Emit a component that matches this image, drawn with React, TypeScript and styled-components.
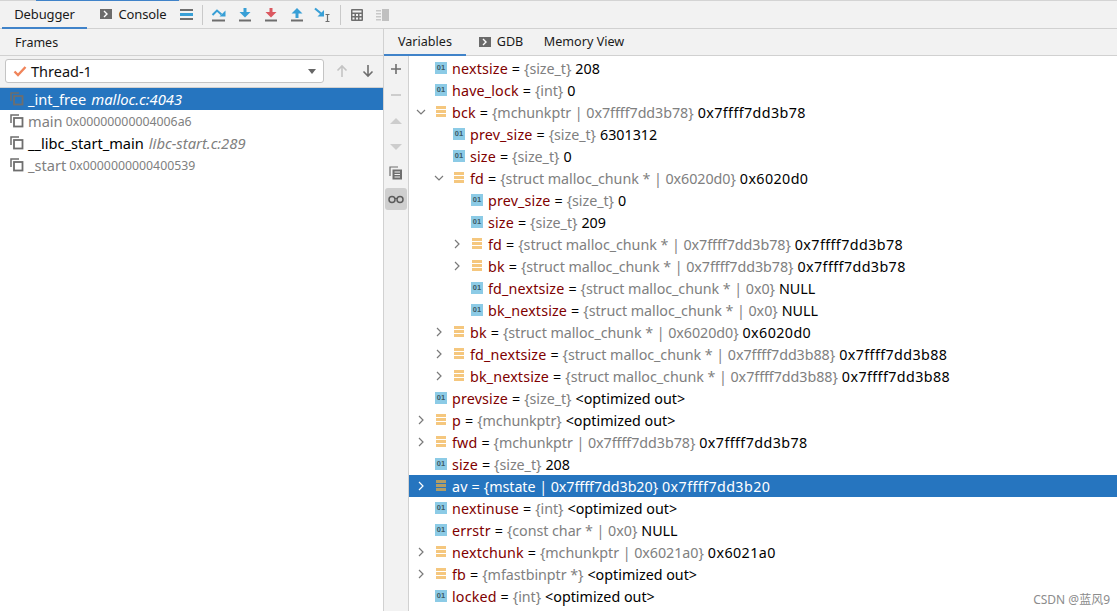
import React from 'react';
import styled, { createGlobalStyle } from 'styled-components';

const Global = createGlobalStyle`
  html, body { margin: 0; padding: 0; background: #fff; }
  body { font-family: "Noto Sans", "Open Sans", sans-serif; font-size: 13px; color: #000; overflow: hidden; }
`;

const Page = styled.div`
  width: 1117px;
  height: 611px;
  display: flex;
  flex-direction: column;
  overflow: hidden;
  position: relative;
`;

const TopBar = styled.div`
  height: 29px;
  flex: none;
  display: flex;
  align-items: stretch;
  background: #f2f2f2;
  border-top: 1px solid #d4d4d4;
  border-bottom: 1px solid #d1d1d1;
  padding-left: 2px;
  box-sizing: border-box;
  position: relative;

  &::before {
    content: '';
    position: absolute;
    top: -1px;
    left: 36px;
    width: 143px;
    height: 1px;
    background: #4083c9;
  }
`;

const Tab = styled.div<{ $active?: boolean; $w: number }>`
  width: ${p => p.$w}px;
  flex: none;
  box-sizing: border-box;
  display: flex;
  align-items: center;
  justify-content: center;
  gap: 6px;
  font-size: 13px;
  color: #1a1a1a;
  letter-spacing: -0.1px;
  border-bottom: 2px solid ${p => (p.$active ? '#4083c9' : 'transparent')};
  margin-bottom: -1px;
`;

const ToolIcon = styled.div<{ $w?: number }>`
  width: ${p => p.$w ?? 26}px;
  flex: none;
  display: flex;
  align-items: center;
  justify-content: center;
`;

const ToolSep = styled.div<{ $gap: number }>`
  width: 1px;
  height: 20px;
  background: #c9c9c9;
  align-self: center;
  margin: 0 3px 0 ${p => p.$gap}px;
  flex: none;
`;

const Body = styled.div`
  flex: 1;
  display: flex;
  min-height: 0;
`;

const LeftPane = styled.div`
  width: 383px;
  flex: none;
  display: flex;
  flex-direction: column;
  border-right: 1px solid #d1d1d1;
`;

const PaneHeader = styled.div`
  height: 27px;
  box-sizing: border-box;
  flex: none;
  display: flex;
  align-items: stretch;
  background: #f2f2f2;
  border-bottom: 1px solid #d1d1d1;
`;

const PaneTitle = styled.div`
  padding-left: 15px;
  display: flex;
  align-items: center;
  font-size: 12.5px;
  color: #1a1a1a;
`;

const ThreadRow = styled.div`
  height: 32px;
  flex: none;
  display: flex;
  align-items: flex-start;
  background: #f2f2f2;
  border-bottom: 1px solid #d1d1d1;
  padding: 3px 0 0 5px;
  box-sizing: border-box;
`;

const ThreadSelect = styled.div`
  width: 319px;
  height: 24px;
  box-sizing: border-box;
  background: #fff;
  border: 1px solid #c4c4c4;
  border-radius: 3px;
  display: flex;
  align-items: center;
  padding-left: 7px;
  gap: 4px;
  font-size: 14.5px;
  color: #111;
`;

const Caret = styled.div`
  margin-left: auto;
  margin-right: 7px;
  width: 0;
  height: 0;
  border-left: 4px solid transparent;
  border-right: 4px solid transparent;
  border-top: 5px solid #666;
`;

const ThreadArrows = styled.div`
  display: flex;
  gap: 12px;
  margin: 5px 0 0 11px;
`;

const FrameList = styled.div`
  flex: 1;
  background: #fff;
`;

const FrameRow = styled.div<{ $selected?: boolean }>`
  height: 22px;
  display: flex;
  align-items: center;
  padding-left: 10px;
  gap: 4px;
  white-space: nowrap;
  font-size: 14.6px;
  background: ${p => (p.$selected ? '#2675bf' : 'transparent')};
  color: ${p => (p.$selected ? '#fff' : '#000')};
`;

const FrameName = styled.span<{ $dim?: boolean }>`
  color: ${p => (p.$dim ? '#808080' : 'inherit')};
`;

const FrameLoc = styled.span<{ $selected?: boolean }>`
  font-style: italic;
  font-size: 14.8px;
  margin-left: 1px;
  color: ${p => (p.$selected ? '#fff' : '#808080')};
`;

const FrameAddr = styled.span`
  font-size: 12.3px;
  margin-left: -1px;
  color: #808080;
`;

const RightPane = styled.div`
  flex: 1;
  min-width: 0;
  display: flex;
  flex-direction: column;
`;

const SubTab = styled(Tab)`
  font-size: 12.6px;
  letter-spacing: 0;
`;

const Content = styled.div`
  flex: 1;
  display: flex;
  min-height: 0;
`;

const SideBar = styled.div`
  width: 24px;
  flex: none;
  background: #f2f2f2;
  border-right: 1px solid #d1d1d1;
  display: flex;
  flex-direction: column;
  align-items: center;
  gap: 4px;
  padding-top: 2px;
`;

const SideBtn = styled.div<{ $on?: boolean }>`
  width: 22px;
  height: 22px;
  display: flex;
  align-items: center;
  justify-content: center;
  border-radius: 3px;
  background: ${p => (p.$on ? '#cfcfcf' : 'transparent')};
`;

const Tree = styled.div`
  flex: 1;
  min-width: 0;
  background: #fff;
  padding-top: 1px;
`;

const Row = styled.div<{ $level: number; $selected?: boolean }>`
  height: 22px;
  display: flex;
  align-items: center;
  padding-left: ${p => 6 + p.$level * 18}px;
  white-space: nowrap;
  font-size: 14.3px;
  background: ${p => (p.$selected ? '#2675bf' : 'transparent')};
  color: ${p => (p.$selected ? '#fff' : '#000')};
`;

const Chevron = styled.div`
  width: 12px;
  height: 12px;
  flex: none;
  margin-right: 8px;
  display: flex;
  align-items: center;
  justify-content: center;
`;

const NodeIcon = styled.div`
  width: 12px;
  height: 12px;
  flex: none;
  margin-right: 5px;
`;

const VarName = styled.span<{ $selected?: boolean }>`
  color: ${p => (p.$selected ? '#fff' : '#7f0000')};
  letter-spacing: 0.15px;
`;

const Eq = styled.span`
  margin: 0 4px;
`;

const VarType = styled.span<{ $selected?: boolean }>`
  color: ${p => (p.$selected ? '#fff' : '#808080')};
  margin-right: 4px;
  letter-spacing: -0.05px;
`;

const VarValue = styled.span<{ $hex: boolean }>`
  letter-spacing: ${p => (p.$hex ? '0.4px' : '0')};
`;

const Watermark = styled.div`
  position: absolute;
  right: 7px;
  bottom: 3px;
  font-size: 12px;
  color: #8c8c8c;
  font-family: "Noto Sans", "Noto Sans CJK SC", sans-serif;
`;

const StepOver = () => (
  <svg width="16" height="16" viewBox="0 0 16 16">
    <path d="M1.5 8 L6 3.5 L10.5 7.5" fill="none" stroke="#389fd6" strokeWidth="2" />
    <path d="M14.5 3.5 V9.5 H8.5 Z" fill="#389fd6" />
    <rect x="1" y="12.5" width="13" height="2" fill="#6e6e6e" />
  </svg>
);

const ArrowDown = ({ color }: { color: string }) => (
  <svg width="16" height="16" viewBox="0 0 16 16">
    <path d="M6.5 1 H9.5 V5 H13.5 L8 10.5 L2.5 5 H6.5 Z" fill={color} />
    <rect x="2" y="12.5" width="12" height="2" fill="#6e6e6e" />
  </svg>
);

const ArrowUpOut = () => (
  <svg width="16" height="16" viewBox="0 0 16 16">
    <path d="M6.5 11 H9.5 V6.5 H13.5 L8 1 L2.5 6.5 H6.5 Z" fill="#389fd6" />
    <rect x="2" y="12.5" width="12" height="2" fill="#6e6e6e" />
  </svg>
);

const RunToCursor = () => (
  <svg width="18" height="16" viewBox="0 0 18 16">
    <path d="M1 1.5 L7 6.5" fill="none" stroke="#389fd6" strokeWidth="2.2" />
    <path d="M10 3 V9.5 H3.5 Z" fill="#389fd6" />
    <path d="M11.5 7.5 H15.5 M13.5 7.5 V14.5 M11.5 14.5 H15.5" fill="none" stroke="#6e6e6e" strokeWidth="1.2" />
  </svg>
);

const Calculator = () => (
  <svg width="14" height="14" viewBox="0 0 14 14">
    <rect x="1" y="1" width="12" height="12" rx="1" fill="#6e6e6e" />
    <rect x="2.5" y="2.5" width="9" height="2" fill="#f2f2f2" />
    <path d="M2.5 6 H4.5 V8 H2.5 Z M6 6 H8 V8 H6 Z M9.5 6 H11.5 V8 H9.5 Z M2.5 9.5 H4.5 V11.5 H2.5 Z M6 9.5 H8 V11.5 H6 Z M9.5 9.5 H11.5 V11.5 H9.5 Z" fill="#f2f2f2" />
  </svg>
);

const Layout = () => (
  <svg width="14" height="14" viewBox="0 0 14 14">
    <path d="M0 2 H5 V3.5 H0 Z M0 5 H5 V6.5 H0 Z M0 8 H5 V9.5 H0 Z M0 11 H5 V12.5 H0 Z" fill="#c8c8c8" />
    <rect x="6" y="1" width="7" height="12" fill="#c0c0c0" />
  </svg>
);

const MenuLines = () => (
  <svg width="14" height="14" viewBox="0 0 14 14">
    <rect x="0" y="1" width="13" height="2" fill="#6e6e6e" />
    <rect x="0" y="5" width="13" height="3" fill="#389fd6" />
    <rect x="0" y="10" width="13" height="2" fill="#6e6e6e" />
  </svg>
);

const ConsoleIcon = () => (
  <svg width="12" height="10" viewBox="0 0 12 10">
    <rect width="12" height="10" fill="#6b6b6b" />
    <path d="M4 2 L7 5 L4 8" fill="none" stroke="#fff" strokeWidth="1.4" />
  </svg>
);

const FrameIcon = () => (
  <svg width="14" height="14" viewBox="0 0 14 14" style={{ flex: 'none' }}>
    <path d="M1 9 V1 H9" fill="none" stroke="#6e6e6e" strokeWidth="1.5" />
    <rect x="4" y="4" width="8.5" height="8.5" fill="none" stroke="#6e6e6e" strokeWidth="1.8" />
  </svg>
);

const Check = () => (
  <svg width="14" height="12" viewBox="0 0 14 12">
    <path d="M1.5 6.5 L5 10 L12.5 2" fill="none" stroke="#f0845a" strokeWidth="2.4" />
  </svg>
);

const UpDown = ({ dir, color }: { dir: 'up' | 'down'; color: string }) => (
  <svg width="14" height="14" viewBox="0 0 14 14">
    <path
      d={dir === 'up' ? 'M7 13 V2 M2.5 6.5 L7 2 L11.5 6.5' : 'M7 1 V12 M2.5 7.5 L7 12 L11.5 7.5'}
      fill="none"
      stroke={color}
      strokeWidth="1.6"
    />
  </svg>
);

const Plus = ({ color }: { color: string }) => (
  <svg width="12" height="12" viewBox="0 0 12 12">
    <path d="M6 1 V11 M1 6 H11" stroke={color} strokeWidth="1.6" />
  </svg>
);

const Minus = () => (
  <svg width="12" height="12" viewBox="0 0 12 12">
    <path d="M1 6 H11" stroke="#c4c4c4" strokeWidth="1.6" />
  </svg>
);

const Tri = ({ up }: { up?: boolean }) => (
  <svg width="12" height="8" viewBox="0 0 12 8">
    <path d={up ? 'M0 7 L6 1 L12 7 Z' : 'M0 1 L6 7 L12 1 Z'} fill="#cdcdcd" />
  </svg>
);

const CopyList = () => (
  <svg width="14" height="14" viewBox="0 0 14 14">
    <path d="M1 10 V1 H9" fill="none" stroke="#6e6e6e" strokeWidth="1.2" />
    <rect x="3.5" y="3.5" width="9.5" height="10" fill="#6e6e6e" />
    <path d="M5.5 6 H11 M5.5 8.5 H11 M5.5 11 H11" stroke="#f2f2f2" strokeWidth="1" />
  </svg>
);

const Glasses = () => (
  <svg width="16" height="10" viewBox="0 0 16 10">
    <circle cx="4" cy="5.5" r="3" fill="none" stroke="#5c5c5c" strokeWidth="1.5" />
    <circle cx="12" cy="5.5" r="3" fill="none" stroke="#5c5c5c" strokeWidth="1.5" />
    <path d="M7 4.5 H9" stroke="#5c5c5c" strokeWidth="1.2" fill="none" />
  </svg>
);

const PrimIcon = () => (
  <svg width="12" height="12" viewBox="0 0 12 12" style={{ display: 'block' }}>
    <rect width="12" height="12" fill="#8ccbe6" />
    <text x="6" y="8.4" textAnchor="middle" fontSize="7.5" fontWeight="700" fontFamily="'Liberation Sans', sans-serif" fill="#3d5a66">01</text>
  </svg>
);

const StructIcon = ({ selected }: { selected?: boolean }) => (
  <svg width="12" height="12" viewBox="0 0 12 12" style={{ display: 'block' }}>
    <path d="M1 0 H11 V3 H1 Z M1 4 H11 V7 H1 Z M1 8 H11 V11 H1 Z" fill={selected ? '#b09d66' : '#f5c77e'} />
  </svg>
);

const ChevronIcon = ({ open, color }: { open?: boolean; color: string }) => (
  <svg width="10" height="10" viewBox="0 0 10 10">
    <path d={open ? 'M1 3 L5 7 L9 3' : 'M3 1 L7 5 L3 9'} fill="none" stroke={color} strokeWidth="1.2" />
  </svg>
);

interface IVar {
  level: number;
  name: string;
  type: string;
  value: string;
  kind: 'prim' | 'struct';
  open?: boolean;
  selected?: boolean;
}

const P = (level: number, name: string, type: string, value: string): IVar => ({ level, name, type, value, kind: 'prim' });
const S = (level: number, name: string, type: string, value: string, open?: boolean, selected?: boolean): IVar => ({
  level, name, type, value, kind: 'struct', open, selected,
});

const VARS: IVar[] = [
  P(0, 'nextsize', '{size_t}', '208'),
  P(0, 'have_lock', '{int}', '0'),
  S(0, 'bck', '{mchunkptr | 0x7ffff7dd3b78}', '0x7ffff7dd3b78', true),
  P(1, 'prev_size', '{size_t}', '6301312'),
  P(1, 'size', '{size_t}', '0'),
  S(1, 'fd', '{struct malloc_chunk * | 0x6020d0}', '0x6020d0', true),
  P(2, 'prev_size', '{size_t}', '0'),
  P(2, 'size', '{size_t}', '209'),
  S(2, 'fd', '{struct malloc_chunk * | 0x7ffff7dd3b78}', '0x7ffff7dd3b78'),
  S(2, 'bk', '{struct malloc_chunk * | 0x7ffff7dd3b78}', '0x7ffff7dd3b78'),
  P(2, 'fd_nextsize', '{struct malloc_chunk * | 0x0}', 'NULL'),
  P(2, 'bk_nextsize', '{struct malloc_chunk * | 0x0}', 'NULL'),
  S(1, 'bk', '{struct malloc_chunk * | 0x6020d0}', '0x6020d0'),
  S(1, 'fd_nextsize', '{struct malloc_chunk * | 0x7ffff7dd3b88}', '0x7ffff7dd3b88'),
  S(1, 'bk_nextsize', '{struct malloc_chunk * | 0x7ffff7dd3b88}', '0x7ffff7dd3b88'),
  P(0, 'prevsize', '{size_t}', '<optimized out>'),
  S(0, 'p', '{mchunkptr}', '<optimized out>'),
  S(0, 'fwd', '{mchunkptr | 0x7ffff7dd3b78}', '0x7ffff7dd3b78'),
  P(0, 'size', '{size_t}', '208'),
  S(0, 'av', '{mstate | 0x7ffff7dd3b20}', '0x7ffff7dd3b20', false, true),
  P(0, 'nextinuse', '{int}', '<optimized out>'),
  P(0, 'errstr', '{const char * | 0x0}', 'NULL'),
  S(0, 'nextchunk', '{mchunkptr | 0x6021a0}', '0x6021a0'),
  S(0, 'fb', '{mfastbinptr *}', '<optimized out>'),
  P(0, 'locked', '{int}', '<optimized out>'),
];

const VarRow = ({ v }: { v: IVar }) => (
  <Row $level={v.level} $selected={v.selected}>
    <Chevron>
      {v.kind === 'struct' && <ChevronIcon open={v.open} color={v.selected ? '#fff' : '#7a7a7a'} />}
    </Chevron>
    <NodeIcon>{v.kind === 'prim' ? <PrimIcon /> : <StructIcon selected={v.selected} />}</NodeIcon>
    <VarName $selected={v.selected}>{v.name}</VarName>
    <Eq>=</Eq>
    <VarType $selected={v.selected}>{v.type}</VarType>
    <VarValue $hex={v.value.startsWith('0x')}>{v.value}</VarValue>
  </Row>
);

export default () => (
  <Page>
    <Global />
    <TopBar>
      <Tab $active $w={85}>Debugger</Tab>
      <Tab $w={93}><ConsoleIcon />Console</Tab>
      <ToolIcon $w={14}><MenuLines /></ToolIcon>
      <ToolSep $gap={8} />
      <ToolIcon><StepOver /></ToolIcon>
      <ToolIcon><ArrowDown color="#389fd6" /></ToolIcon>
      <ToolIcon><ArrowDown color="#db5860" /></ToolIcon>
      <ToolIcon><ArrowUpOut /></ToolIcon>
      <ToolIcon><RunToCursor /></ToolIcon>
      <ToolSep $gap={4} />
      <ToolIcon><Calculator /></ToolIcon>
      <ToolIcon><Layout /></ToolIcon>
    </TopBar>
    <Body>
      <LeftPane>
        <PaneHeader><PaneTitle>Frames</PaneTitle></PaneHeader>
        <ThreadRow>
          <ThreadSelect>
            <Check />
            Thread-1
            <Caret />
          </ThreadSelect>
          <ThreadArrows>
            <UpDown dir="up" color="#c4c4c4" />
            <UpDown dir="down" color="#6e6e6e" />
          </ThreadArrows>
        </ThreadRow>
        <FrameList>
          <FrameRow $selected>
            <FrameIcon />
            <span>_int_free</span>
            <FrameLoc $selected>malloc.c:4043</FrameLoc>
          </FrameRow>
          <FrameRow>
            <FrameIcon />
            <FrameName $dim>main</FrameName>
            <FrameAddr>0x00000000004006a6</FrameAddr>
          </FrameRow>
          <FrameRow>
            <FrameIcon />
            <span>__libc_start_main</span>
            <FrameLoc>libc-start.c:289</FrameLoc>
          </FrameRow>
          <FrameRow>
            <FrameIcon />
            <FrameName $dim>_start</FrameName>
            <FrameAddr>0x0000000000400539</FrameAddr>
          </FrameRow>
        </FrameList>
      </LeftPane>
      <RightPane>
        <PaneHeader>
          <SubTab $active $w={82}>Variables</SubTab>
          <SubTab $w={70}><ConsoleIcon />GDB</SubTab>
          <SubTab $w={96}>Memory View</SubTab>
        </PaneHeader>
        <Content>
          <SideBar>
            <SideBtn><Plus color="#6e6e6e" /></SideBtn>
            <SideBtn><Minus /></SideBtn>
            <SideBtn><Tri up /></SideBtn>
            <SideBtn><Tri /></SideBtn>
            <SideBtn><CopyList /></SideBtn>
            <SideBtn $on><Glasses /></SideBtn>
          </SideBar>
          <Tree>
            {VARS.map((v, i) => <VarRow key={i} v={v} />)}
          </Tree>
        </Content>
      </RightPane>
    </Body>
    <Watermark>CSDN @蓝风9</Watermark>
  </Page>
);
